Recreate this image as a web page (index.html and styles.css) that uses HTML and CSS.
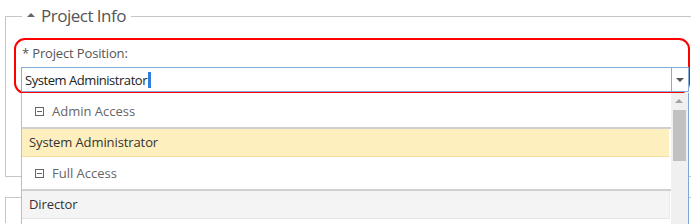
FILE: index.html
```html
<!DOCTYPE html>
<html>
<head>
<meta charset="utf-8">
<link rel="stylesheet" href="styles.css">
</head>
<body>
<div class="page">
  <fieldset class="section">
    <legend class="legend"><span class="caret-up"></span><span class="legend-text">Project Info</span></legend>
    <div class="field-group">
      <label class="field-label">* Project Position:</label>
      <div class="combo">
        <div class="combo-input"><span class="combo-text">System Administrator</span><span class="text-cursor"></span></div>
        <div class="combo-button"><span class="caret-down"></span></div>
        <div class="popup">
          <div class="list">
            <div class="group"><span class="minus-box"></span><span>Admin Access</span></div>
            <div class="item selected">System Administrator</div>
            <div class="group"><span class="minus-box"></span><span>Full Access</span></div>
            <div class="item hovered">Director</div>
          </div>
          <div class="scrollbar">
            <div class="scroll-up"></div>
            <div class="scroll-thumb"></div>
          </div>
        </div>
      </div>
    </div>
    <div class="rest"></div>
  </fieldset>
  <fieldset class="section second">
    <div class="rest2"></div>
  </fieldset>
</div>
</body>
</html>
```
FILE: styles.css
```css
html, body {
  margin: 0;
  padding: 0;
  background: #fff;
  overflow: hidden;
}
body {
  width: 691px;
  height: 224px;
  font-family: "Open Sans", "Liberation Sans", sans-serif;
  color: #333;
}
.page {
  position: relative;
}
.section {
  margin: 4px 0 0 5px;
  padding: 0;
  border: 1px solid #c6c6c6;
  width: 720px;
  box-sizing: border-box;
}
.legend {
  margin-left: 16px;
  padding: 0 5px;
  height: 24px;
  line-height: 24px;
  display: flex;
  align-items: center;
}
.caret-up {
  width: 0;
  height: 0;
  border-left: 4px solid transparent;
  border-right: 4px solid transparent;
  border-bottom: 4px solid #666;
  margin-right: 6px;
  margin-top: -3px;
}
.legend-text {
  font-size: 17px;
  letter-spacing: -0.5px;
  color: #555;
}
.field-group {
  margin: 10px 0 0 8px;
  width: 676px;
  height: 56px;
  box-sizing: border-box;
  border: 2px solid #f00;
  border-radius: 11px;
  padding: 0 0 0 5px;
  position: relative;
  z-index: 2;
}
.field-label {
  display: block;
  font-size: 13px;
  letter-spacing: -0.15px;
  color: #555;
  height: 20px;
  line-height: 20px;
  margin: 3px 0 0 1px;
}
.combo {
  position: relative;
  margin-top: 4px;
  display: flex;
  width: 668px;
  height: 25px;
  box-sizing: border-box;
  border: 1px solid #86acdc;
  background: #fff;
}
.combo-input {
  flex: 1;
  display: flex;
  align-items: center;
  padding-left: 3px;
  font-size: 13px;
  letter-spacing: -0.45px;
  color: #222;
}
.text-cursor {
  display: inline-block;
  width: 3px;
  height: 16px;
  background: #2e7fe0;
  margin-left: 1px;
}
.combo-button {
  width: 16px;
  border-left: 1px solid #86acdc;
  display: flex;
  align-items: center;
  justify-content: center;
}
.caret-down {
  width: 0;
  height: 0;
  border-left: 4px solid transparent;
  border-right: 4px solid transparent;
  border-top: 4px solid #555;
  margin-top: 1px;
}
.popup {
  position: absolute;
  left: -1px;
  top: 25px;
  width: 668px;
  height: 131px;
  box-sizing: border-box;
  border-left: 1px solid #a8c2e6;
  border-right: 1px solid #7ea7d8;
  background: #fff;
  display: flex;
  z-index: -1;
}
.list {
  flex: 1;
  overflow: hidden;
  padding-top: 2px;
}
.group {
  height: 32px;
  display: flex;
  align-items: center;
  padding-left: 13px;
  border-bottom: 2px solid #d0d0d0;
  font-size: 13px;
  letter-spacing: 0;
  color: #666;
}
.minus-box {
  position: relative;
  width: 9px;
  height: 9px;
  box-sizing: border-box;
  border: 1px solid #666;
  margin-right: 8px;
}
.minus-box::after {
  content: "";
  position: absolute;
  left: 1px;
  right: 1px;
  top: 3px;
  height: 1px;
  background: #666;
}
.item {
  height: 27px;
  line-height: 27px;
  padding-left: 7px;
  margin-right: 1px;
  font-size: 13px;
  letter-spacing: -0.1px;
  color: #333;
  border-bottom: 1px solid #e8e8e8;
  border-right: 1px solid transparent;
}
.item.selected {
  background: #feefbe;
  border-bottom-color: #f3dfa4;
  border-right-color: #fff;
}
.item.hovered {
  background: #f4f4f4;
  border-bottom-color: #e6e6e6;
  border-right-color: #ebebeb;
}
.scrollbar {
  width: 17px;
  background: #f0f0f0;
  position: relative;
}
.scroll-up {
  position: absolute;
  left: 4px;
  top: 6px;
  width: 0;
  height: 0;
  border-left: 4px solid transparent;
  border-right: 4px solid transparent;
  border-bottom: 4px solid #a3a3a3;
}
.scroll-thumb {
  position: absolute;
  left: 2px;
  right: 2px;
  top: 17px;
  height: 51px;
  background: #c1c1c1;
}
.rest {
  height: 82px;
}
.second {
  margin-top: 20px;
  border-bottom: none;
}
.rest2 {
  height: 25px;
}
```
